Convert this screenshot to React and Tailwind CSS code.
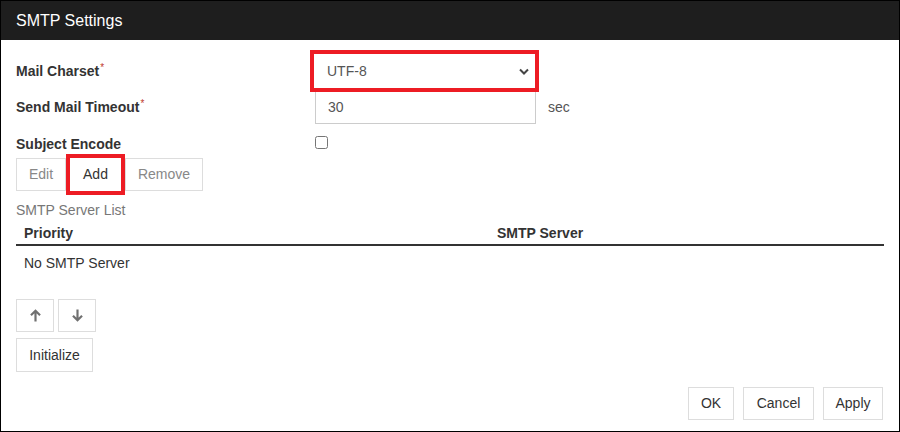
import { useState } from 'react';

function ArrowIcon({ down }) {
  return (
    <svg width="13" height="13" viewBox="0 0 12 12" className={down ? 'rotate-180' : ''}>
      <path d="M6 11.5V2M1.8 5.8L6 1.6L10.2 5.8" fill="none" stroke="#707070" strokeWidth="2" />
    </svg>
  );
}

function Label({ children, required }) {
  return (
    <span className="text-[14px] font-bold text-[#333]">
      {children}
      {required && <sup className="text-[#c0392b] text-[10px] font-normal ml-[1px]">*</sup>}
    </span>
  );
}

export default function App() {
  const [charset, setCharset] = useState('UTF-8');
  const [timeout, setTimeoutVal] = useState('30');
  const [encode, setEncode] = useState(false);

  return (
    <div className="w-[900px] h-[432px] border border-black bg-white flex flex-col font-['Liberation_Sans',Arial,sans-serif] text-[14px] text-[#333]">
      {/* Header */}
      <div className="h-[39px] bg-[#1e1e1e] text-white text-[16px] pl-[15px] flex items-center">
        SMTP Settings
      </div>

      <div className="px-[15px] flex flex-col flex-1">
        {/* Mail Charset */}
        <div className="grid grid-cols-[294px_1fr] items-center mt-[10px] h-[42px]">
          <Label required>Mail Charset</Label>
          <div className="w-[229px] h-[42px] border-4 border-[#ed1c24] relative">
            <select
              value={charset}
              onChange={e => setCharset(e.target.value)}
              className="w-full h-full appearance-none bg-white pl-[13px] text-[14px] text-[#555] outline-none"
            >
              <option>UTF-8</option>
              <option>ISO-2022-JP</option>
              <option>Shift_JIS</option>
              <option>EUC-JP</option>
            </select>
            <svg width="10" height="7" viewBox="0 0 10 7" className="absolute right-[6px] top-[14px] pointer-events-none">
              <path d="M1 1.5L5 5.5L9 1.5" fill="none" stroke="#444" strokeWidth="2" />
            </svg>
          </div>
        </div>

        {/* Send Mail Timeout */}
        <div className="grid grid-cols-[299px_1fr] items-center -mt-[2px] h-[34px]">
          <Label required>Send Mail Timeout</Label>
          <div className="flex items-center">
            <input
              value={timeout}
              onChange={e => setTimeoutVal(e.target.value)}
              className="w-[221px] h-[34px] border border-[#ccc] pl-[12px] text-[14px] text-[#555] outline-none"
            />
            <span className="ml-[12px] text-[#555]">sec</span>
          </div>
        </div>

        {/* Subject Encode */}
        <div className="grid grid-cols-[299px_1fr] items-center mt-[10px] h-[20px]">
          <Label>Subject Encode</Label>
          <div className="flex items-center -mt-[4px]">
            <input
              type="checkbox"
              checked={encode}
              onChange={e => setEncode(e.target.checked)}
              className="w-[13px] h-[13px] m-0"
            />
          </div>
        </div>

        {/* Edit / Add / Remove */}
        <div className="flex items-center h-[41px]">
          <button className="w-[50px] h-[33px] border border-[#ddd] text-[#888] bg-white">Edit</button>
          <button className="w-[59px] h-[41px] border-4 border-[#ed1c24] text-[#333] bg-white">Add</button>
          <button className="w-[78px] h-[33px] border border-[#ddd] text-[#888] bg-white">Remove</button>
        </div>

        <div className="mt-[5px] h-[20px] leading-[20px] text-[#777]">SMTP Server List</div>

        {/* Table */}
        <div className="w-[868px]">
          <div className="grid grid-cols-[473px_1fr] h-[26px] pt-[3px] items-center border-b-2 border-[#333] font-bold px-[8px]">
            <span>Priority</span>
            <span>SMTP Server</span>
          </div>
          <div className="h-[34px] leading-[34px] px-[8px] text-[#333]">No SMTP Server</div>
        </div>

        {/* Order buttons */}
        <div className="flex gap-[4px] mt-[19px]">
          <button className="w-[38px] h-[33px] border border-[#ddd] bg-white flex items-center justify-center">
            <ArrowIcon />
          </button>
          <button className="w-[38px] h-[33px] border border-[#ddd] bg-white flex items-center justify-center">
            <ArrowIcon down />
          </button>
        </div>
        <div className="mt-[6px]">
          <button className="w-[77px] h-[34px] border border-[#ddd] bg-white text-[#333]">Initialize</button>
        </div>

        {/* Footer */}
        <div className="flex justify-end gap-[9px] mt-[15px] pr-[1px]">
          <button className="w-[46px] h-[33px] border border-[#ddd] bg-white text-[#333]">OK</button>
          <button className="w-[71px] h-[33px] border border-[#ddd] bg-white text-[#333]">Cancel</button>
          <button className="w-[60px] h-[33px] border border-[#ddd] bg-white text-[#333]">Apply</button>
        </div>
      </div>
    </div>
  );
}
